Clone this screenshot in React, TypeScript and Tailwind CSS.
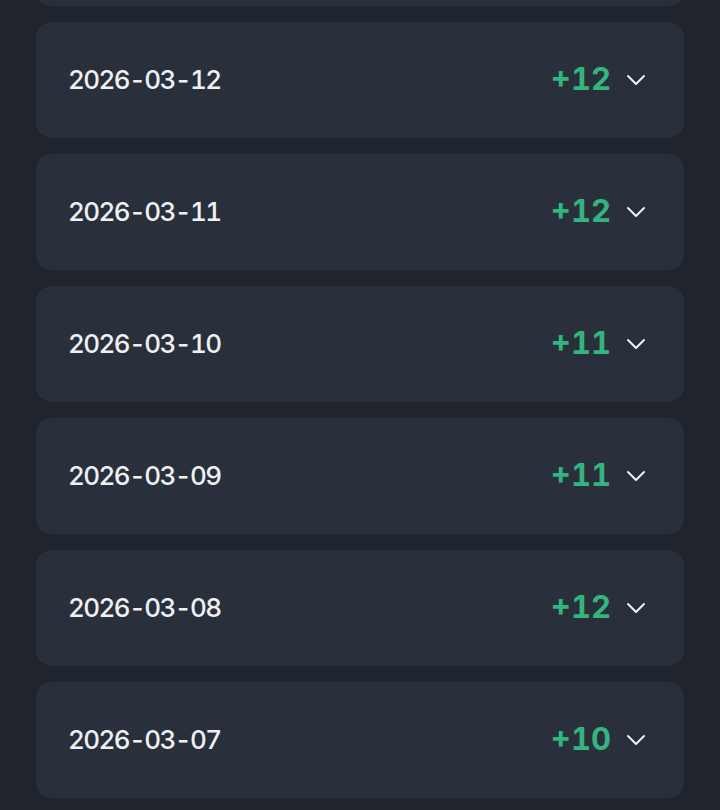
import React from 'react';

interface DayItem {
  date: string;
  points: number;
}

const DAYS: DayItem[] = [
  { date: '2026-03-12', points: 12 },
  { date: '2026-03-11', points: 12 },
  { date: '2026-03-10', points: 11 },
  { date: '2026-03-09', points: 11 },
  { date: '2026-03-08', points: 12 },
  { date: '2026-03-07', points: 10 },
];

function Chevron() {
  return (
    <svg width="20" height="12" viewBox="0 0 20 12" fill="none" className="shrink-0">
      <path d="M2 2l8 8 8-8" stroke="#f1f3f6" strokeWidth="2" strokeLinecap="round" strokeLinejoin="round" />
    </svg>
  );
}

export default function App() {
  return (
    <div
      className="min-h-[810px] w-[720px] overflow-hidden bg-[#20252d] px-9"
      style={{ fontFamily: 'Inter, "Noto Sans", sans-serif' }}
    >
      <div className="-mt-[110px] flex flex-col gap-4">
        {/* previous day, scrolled mostly out of view */}
        <div className="h-[116px] w-full rounded-2xl bg-[#29303b]" />
        {DAYS.map((d) => (
          <button
            key={d.date}
            className="flex h-[116px] w-full items-center justify-between rounded-2xl bg-[#29303b] pl-8 pr-[38px] text-left"
          >
            <span className="-mt-[2px] text-[26px] font-medium tabular-nums tracking-[-1.6px] text-[#eef0f3]">
              {d.date}
            </span>
            <span className="flex items-center gap-[15px]">
              <span className="-mt-[3px] text-[31px] font-bold leading-none tabular-nums text-[#34b47e]">
                +{d.points}
              </span>
              <Chevron />
            </span>
          </button>
        ))}
      </div>
    </div>
  );
}
